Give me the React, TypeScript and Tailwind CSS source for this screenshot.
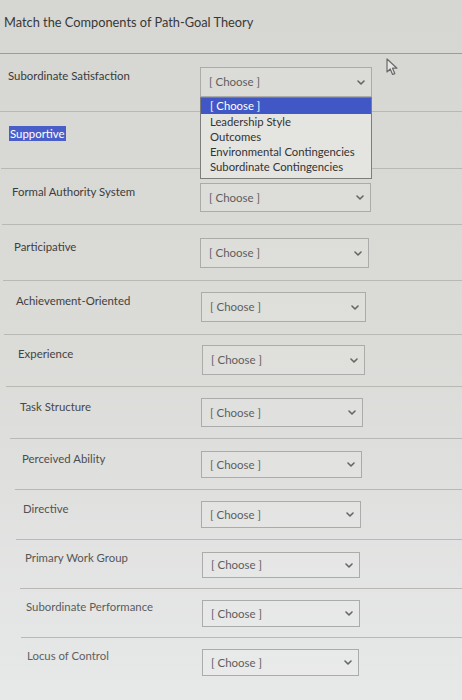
import React from 'react'

type Row = {
  label: string
  row: string
  label_w: string
  sel: string
  text: string
}

const rows: Row[] = [
  { label: 'Subordinate Satisfaction', row: 'h-[58px] pt-[13px] ml-[0px] border-b', label_w: 'w-[200px] pl-[8px] pt-[1px]', sel: 'w-[172px] h-[30px]', text: 'text-[#3a3a3a]' },
  { label: 'Supportive', row: 'h-[57px] pt-[13px] ml-[1px] border-b', label_w: 'w-[199px] pl-[8px] pt-[1px]', sel: 'w-[171px] h-[30px]', text: 'text-[#3a3a3a]' },
  { label: 'Formal Authority System', row: 'h-[56px] pt-[14px] ml-[2px] border-b', label_w: 'w-[198px] pl-[10px] pt-[1px]', sel: 'w-[171px] h-[29px]', text: 'text-[#3c3c3c]' },
  { label: 'Participative', row: 'h-[56px] pt-[13px] ml-[3px] border-b', label_w: 'w-[197px] pl-[11px] pt-[1px]', sel: 'w-[169px] h-[30px]', text: 'text-[#3e3e3e]' },
  { label: 'Achievement-Oriented', row: 'h-[54px] pt-[11px] ml-[4px] border-b', label_w: 'w-[197px] pl-[12px] pt-[1px]', sel: 'w-[165px] h-[30px]', text: 'text-[#414141]' },
  { label: 'Experience', row: 'h-[52px] pt-[10px] ml-[6px] border-b', label_w: 'w-[196px] pl-[12px] pt-[1px]', sel: 'w-[163px] h-[30px]', text: 'text-[#444]' },
  { label: 'Task Structure', row: 'h-[52px] pt-[11px] ml-[10px] border-b', label_w: 'w-[191px] pl-[10px] pt-[1px]', sel: 'w-[162px] h-[29px]', text: 'text-[#484848]' },
  { label: 'Perceived Ability', row: 'h-[51px] pt-[12px] ml-[15px] border-b', label_w: 'w-[186px] pl-[7px] pt-0', sel: 'w-[161px] h-[27px]', text: 'text-[#4d4d4d]' },
  { label: 'Directive', row: 'h-[50px] pt-[11px] ml-[16px] border-b', label_w: 'w-[185px] pl-[7px] pt-0', sel: 'w-[160px] h-[27px]', text: 'text-[#525252]' },
  { label: 'Primary Work Group', row: 'h-[49px] pt-[12px] ml-[20px] border-b', label_w: 'w-[182px] pl-[5px] -mt-[2px]', sel: 'w-[158px] h-[26px]', text: 'text-[#575757]' },
  { label: 'Subordinate Performance', row: 'h-[49px] pt-[11px] ml-[21px] border-b', label_w: 'w-[181px] pl-[5px] -mt-[1px]', sel: 'w-[158px] h-[27px]', text: 'text-[#5c5c5c]' },
  { label: 'Locus of Control', row: 'flex-1 pt-[11px] ml-[22px]', label_w: 'w-[180px] pl-[5px] -mt-[1px]', sel: 'w-[157px] h-[27px]', text: 'text-[#616161]' },
]

const options = ['Leadership Style', 'Outcomes', 'Environmental Contingencies', 'Subordinate Contingencies']

function Chevron() {
  return (
    <svg width="8" height="5" viewBox="0 0 8 5" className="shrink-0">
      <path d="M1 1 L4 4 L7 1" fill="none" stroke="#666" strokeWidth="1.6" strokeLinecap="round" strokeLinejoin="round" />
    </svg>
  )
}

function Select({ size }: { size: string }) {
  return (
    <div className={`${size} flex items-center justify-between border border-[#abaca9] bg-white/10 pl-[8px] pr-[6px]`}>
      <span className="text-[11.5px] text-[#5e5e5e]">[ Choose ]</span>
      <Chevron />
    </div>
  )
}

export default function App() {
  return (
    <div className="relative w-[462px] h-[700px] overflow-hidden bg-linear-to-b from-[#d6d6d2] via-[#dbdbd8] to-[#e7e9e9] font-['Lato','Liberation_Sans',sans-serif]">
      <div className="flex h-full flex-col">
        <div className="h-[54px] border-b border-[#9c9c99] pl-[4px] pt-[14px]">
          <h1 className="text-[12.8px] leading-[17px] text-[#383838]">Match the Components of Path-Goal Theory</h1>
        </div>

        {rows.map((r, i) => (
          <div key={r.label} className={`${r.row} flex items-start border-[#b8b8b5]`}>
            <div className={`${r.label_w} shrink-0 text-[11.4px] leading-[16px] ${r.text}`}>
              {i === 1 ? (
                <span className="bg-[#4a5ec9] px-[1px] py-[1px] text-white">{r.label}</span>
              ) : (
                r.label
              )}
            </div>
            <Select size={r.sel} />
          </div>
        ))}
      </div>

      {/* open dropdown */}
      <div className="absolute left-[200px] top-[97px] w-[172px] border border-[#7d7d7b] bg-[#e4e4e1] pb-[4px] text-[11.3px] leading-[15px] text-[#333]">
        <div className="h-[16px] bg-[#4157c6] pl-[9px] leading-[16px] text-white">[ Choose ]</div>
        {options.map((o) => (
          <div key={o} className="pl-[9px]">{o}</div>
        ))}
      </div>

      {/* mouse pointer */}
      <svg className="absolute left-[386px] top-[58px]" width="14" height="19" viewBox="0 0 14 19">
        <path d="M1 1 L1 14 L4.2 11 L6.6 16.5 L8.8 15.6 L6.5 10.2 L11 10.2 Z" fill="#e6e6e4" stroke="#6a6a6a" strokeWidth="1.2" strokeLinejoin="round" />
      </svg>
    </div>
  )
}
